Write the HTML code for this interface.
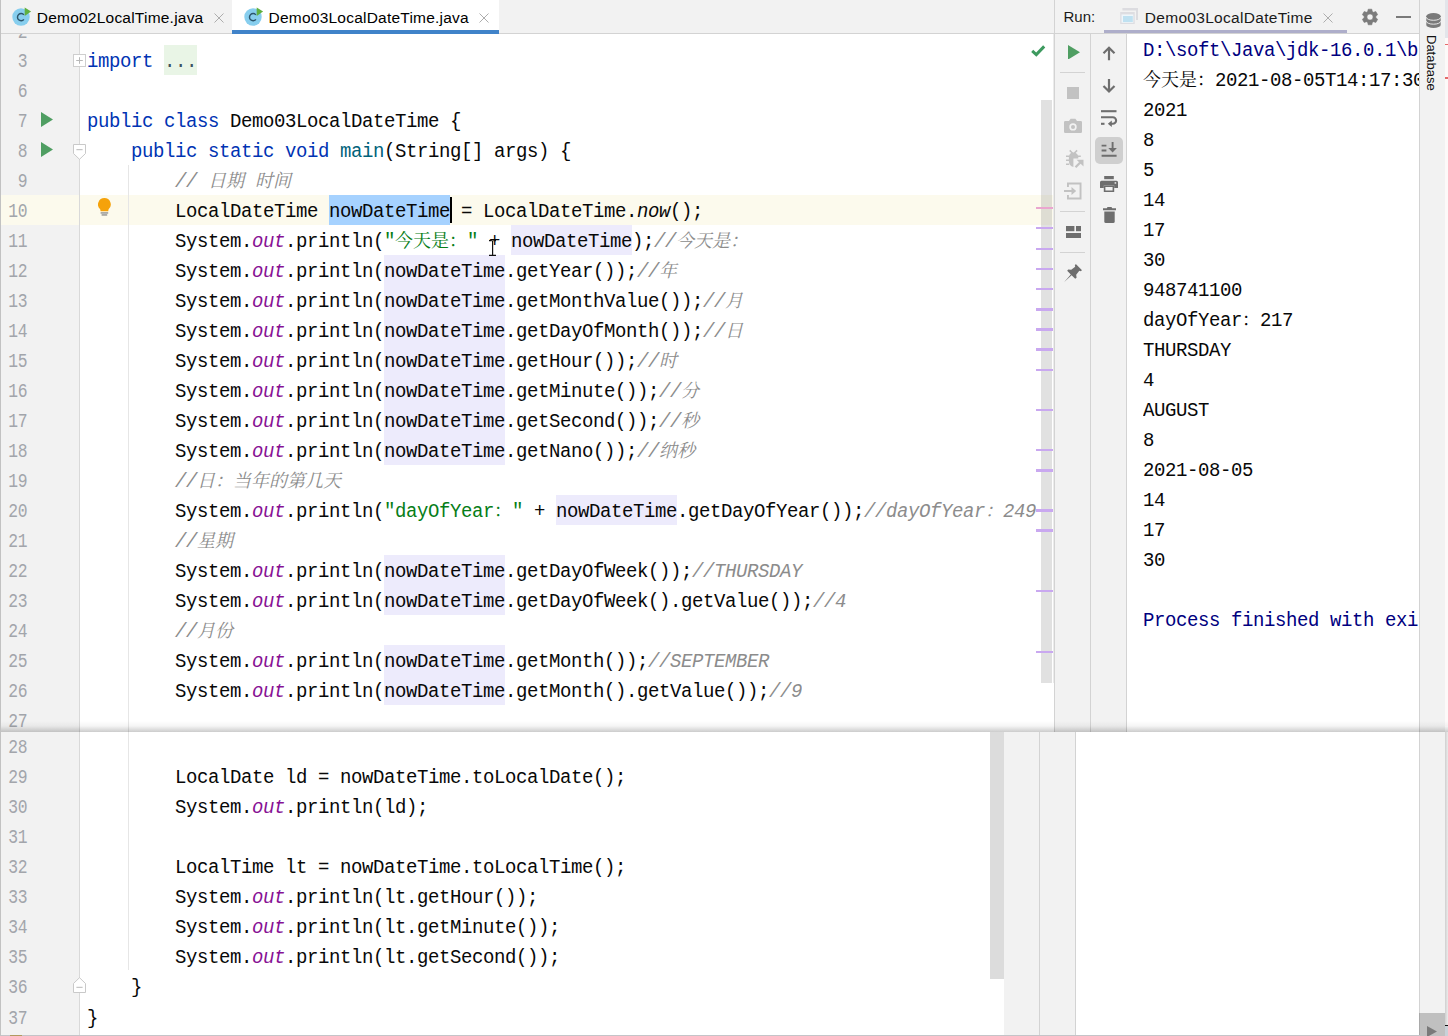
<!DOCTYPE html><html><head><meta charset="utf-8"><title>Demo03LocalDateTime</title><style>
html,body{margin:0;padding:0}
body{width:1448px;height:1036px;position:relative;overflow:hidden;background:#fff;font-family:"Liberation Sans",sans-serif;color:#000}
div,span,svg{box-sizing:border-box}
.a{position:absolute}
.m{font-family:"Liberation Mono",monospace;font-size:19.0px;letter-spacing:-0.4019px;white-space:pre;line-height:30px;height:30px;transform:scaleY(1.02);transform-origin:0 20.06px}
.ln{position:absolute;left:87px;color:#080808}
.no{position:absolute;left:0;width:27.2px;text-align:right;color:#a2a5ab;transform:scale(0.86,1.02);transform-origin:100% 20.06px}
.co{position:absolute;left:1143px;color:#080808}
.k{color:#0033b3}.s{color:#067d17}.c{color:#8c8c8c;font-style:italic}
.f{color:#871094;font-style:italic}.d{color:#00627a}.i{font-style:italic}
.b{color:#00007f}.fo{color:#3b5260}
.j{font-family:"Liberation Mono","Noto Serif CJK SC",monospace;font-size:18px;letter-spacing:0}
.ui{font-family:"Liberation Sans",sans-serif;white-space:pre;position:absolute}
</style></head><body><div class="a" style="left:0px;top:0px;width:1448px;height:33px;background:#f2f2f2;"></div><div class="a" style="left:232px;top:0px;width:267px;height:30px;background:#fff;"></div><div class="a" style="left:0px;top:33px;width:1445px;height:1px;background:#d3d3d3;"></div><div class="a" style="left:232px;top:30px;width:267px;height:3.6px;background:#4083c9;"></div><svg class="a" style="left:9.899999999999999px;top:5.800000000000001px;" width="22" height="22" viewBox="0 0 22 22"><circle cx="11" cy="11" r="8.7" fill="#87ceee"/><path d="M13.9 8.9A3.6 3.6 0 1 0 13.9 13.4" fill="none" stroke="#2d566c" stroke-width="1.45"/><path d="M14.7 1.4V9.9L21.1 5.6Z" fill="#5fb03f"/></svg><div class="ui" style="left:36.8px;top:0px;height:35px;line-height:35px;font-size:15.5px;color:#000;letter-spacing:0.22px">Demo02LocalTime.java</div><svg class="a" style="left:213px;top:11.7px;" width="12" height="12" viewBox="0 0 12 12"><path d="M1.5 1.5L10.5 10.5M10.5 1.5L1.5 10.5" stroke="#adadad" stroke-width="1.0" fill="none"/></svg><svg class="a" style="left:242.4px;top:5.800000000000001px;" width="22" height="22" viewBox="0 0 22 22"><circle cx="11" cy="11" r="8.7" fill="#87ceee"/><path d="M13.9 8.9A3.6 3.6 0 1 0 13.9 13.4" fill="none" stroke="#2d566c" stroke-width="1.45"/><path d="M14.7 1.4V9.9L21.1 5.6Z" fill="#5fb03f"/></svg><div class="ui" style="left:268.6px;top:0px;height:35px;line-height:35px;font-size:15.5px;color:#000;letter-spacing:0.22px">Demo03LocalDateTime.java</div><svg class="a" style="left:477.7px;top:11.7px;" width="12" height="12" viewBox="0 0 12 12"><path d="M1.5 1.5L10.5 10.5M10.5 1.5L1.5 10.5" stroke="#adadad" stroke-width="1.0" fill="none"/></svg><div class="ui" style="left:1063.5px;top:0px;height:34px;line-height:34px;font-size:15px;color:#1a1a1a;">Run:</div><svg class="a" style="left:1120px;top:8px;" width="18" height="16" viewBox="0 0 18 16"><path d="M2.4 0H18V12H16V2.5H2.4Z" fill="#dcdce0"/><rect x="0.2" y="4" width="14.5" height="12" fill="#dddde1"/><rect x="1.5" y="6.4" width="11.9" height="8.4" fill="#eef6fb"/><rect x="3" y="8" width="9.8" height="6" fill="#bfe1f1"/></svg><div class="ui" style="left:1144.8px;top:0px;height:35px;line-height:35px;font-size:15.5px;color:#1a1a1a;letter-spacing:0.3px">Demo03LocalDateTime</div><svg class="a" style="left:1322px;top:11.8px;" width="12" height="12" viewBox="0 0 12 12"><path d="M1.5 1.5L10.5 10.5M10.5 1.5L1.5 10.5" stroke="#adadad" stroke-width="1.0" fill="none"/></svg><div class="a" style="left:1104px;top:30px;width:243px;height:3.4px;background:#aeaeca;"></div><svg class="a" style="left:1360.7px;top:8px;" width="18" height="18" viewBox="0 0 18 18"><path d="M6.70 3.57L7.18 1.21L10.82 1.21L11.30 3.57L12.56 4.29L14.83 3.53L16.66 6.68L14.85 8.27L14.85 9.73L16.66 11.32L14.83 14.47L12.56 13.71L11.30 14.43L10.82 16.79L7.18 16.79L6.70 14.43L5.44 13.71L3.17 14.47L1.34 11.32L3.15 9.73L3.15 8.27L1.34 6.68L3.17 3.53L5.44 4.29Z M12.100 9A3.100 3.100 0 1 0 5.900 9A3.100 3.100 0 1 0 12.100 9Z" fill="#7c7c7c" fill-rule="evenodd" stroke="#7c7c7c" stroke-width="0.600" stroke-linejoin="round"/></svg><div class="a" style="left:1395.5px;top:16px;width:15px;height:2px;background:#7a7a7a;"></div><div class="a" style="left:1px;top:34px;width:78px;height:698px;background:#f2f2f2;"></div><div class="a" style="left:79px;top:34px;width:1px;height:698px;background:#d9d9d9;"></div><div class="a" style="left:80px;top:195px;width:974px;height:30px;background:#fcfaed;"></div><div class="a" style="left:1px;top:195px;width:78px;height:30px;background:#fcfaed;"></div><div class="a" style="left:164px;top:45px;width:33px;height:30px;background:#e9f5e6;"></div><div class="a" style="left:384px;top:255px;width:121px;height:30px;background:#edebfc;"></div><div class="a" style="left:384px;top:285px;width:121px;height:30px;background:#edebfc;"></div><div class="a" style="left:384px;top:315px;width:121px;height:30px;background:#edebfc;"></div><div class="a" style="left:384px;top:345px;width:121px;height:30px;background:#edebfc;"></div><div class="a" style="left:384px;top:375px;width:121px;height:30px;background:#edebfc;"></div><div class="a" style="left:384px;top:405px;width:121px;height:30px;background:#edebfc;"></div><div class="a" style="left:384px;top:435px;width:121px;height:30px;background:#edebfc;"></div><div class="a" style="left:384px;top:555px;width:121px;height:30px;background:#edebfc;"></div><div class="a" style="left:384px;top:585px;width:121px;height:30px;background:#edebfc;"></div><div class="a" style="left:384px;top:645px;width:121px;height:30px;background:#edebfc;"></div><div class="a" style="left:384px;top:675px;width:121px;height:30px;background:#edebfc;"></div><div class="a" style="left:511px;top:225px;width:121px;height:30px;background:#edebfc;"></div><div class="a" style="left:556px;top:495px;width:121px;height:30px;background:#edebfc;"></div><div class="a" style="left:329px;top:195px;width:121px;height:30px;background:#a6d2ff;"></div><div class="a" style="left:128px;top:165px;width:1px;height:567px;background:#e6e6e6;"></div><div class="a" style="left:0;top:34px;width:80px;height:698px;overflow:hidden"><div class="a" style="left:0;top:-34px"><div class="m no" style="top:18px">2</div></div></div><div class="m no" style="top:47px">3</div><div class="m no" style="top:77px">6</div><div class="m no" style="top:107px">7</div><div class="m no" style="top:137px">8</div><div class="m no" style="top:167px">9</div><div class="m no" style="top:197px">10</div><div class="m no" style="top:227px">11</div><div class="m no" style="top:257px">12</div><div class="m no" style="top:287px">13</div><div class="m no" style="top:317px">14</div><div class="m no" style="top:347px">15</div><div class="m no" style="top:377px">16</div><div class="m no" style="top:407px">17</div><div class="m no" style="top:437px">18</div><div class="m no" style="top:467px">19</div><div class="m no" style="top:497px">20</div><div class="m no" style="top:527px">21</div><div class="m no" style="top:557px">22</div><div class="m no" style="top:587px">23</div><div class="m no" style="top:617px">24</div><div class="m no" style="top:647px">25</div><div class="m no" style="top:677px">26</div><div class="m no" style="top:707px">27</div><div class="a" style="left:0;top:34px;width:1041px;height:698px;overflow:hidden"><div class="a" style="left:0;top:-34px"><div class="m ln" style="top:47px"><span class="k">import</span> <span class="fo">...</span></div><div class="m ln" style="top:107px"><span class="k">public class</span> Demo03LocalDateTime {</div><div class="m ln" style="top:137px">    <span class="k">public static void</span> <span class="d">main</span>(String[] args) {</div><div class="m ln" style="top:167px"><span class="c">        // <span class="j">日期</span> <span class="j">时间</span></span></div><div class="m ln" style="top:197px">        LocalDateTime nowDateTime = LocalDateTime.<span class="i">now</span>();</div><div class="m ln" style="top:227px">        System.<span class="f">out</span>.println(<span class="s">"<span class="j">今天是：</span>"</span> + nowDateTime);<span class="c">//<span class="j">今天是：</span></span></div><div class="m ln" style="top:257px">        System.<span class="f">out</span>.println(nowDateTime.getYear());<span class="c">//<span class="j">年</span></span></div><div class="m ln" style="top:287px">        System.<span class="f">out</span>.println(nowDateTime.getMonthValue());<span class="c">//<span class="j">月</span></span></div><div class="m ln" style="top:317px">        System.<span class="f">out</span>.println(nowDateTime.getDayOfMonth());<span class="c">//<span class="j">日</span></span></div><div class="m ln" style="top:347px">        System.<span class="f">out</span>.println(nowDateTime.getHour());<span class="c">//<span class="j">时</span></span></div><div class="m ln" style="top:377px">        System.<span class="f">out</span>.println(nowDateTime.getMinute());<span class="c">//<span class="j">分</span></span></div><div class="m ln" style="top:407px">        System.<span class="f">out</span>.println(nowDateTime.getSecond());<span class="c">//<span class="j">秒</span></span></div><div class="m ln" style="top:437px">        System.<span class="f">out</span>.println(nowDateTime.getNano());<span class="c">//<span class="j">纳秒</span></span></div><div class="m ln" style="top:467px"><span class="c">        //<span class="j">日：当年的第几天</span></span></div><div class="m ln" style="top:497px">        System.<span class="f">out</span>.println(<span class="s">"dayOfYear<span class="j">：</span>"</span> + nowDateTime.getDayOfYear());<span class="c">//dayOfYear<span class="j">：</span>249</span></div><div class="m ln" style="top:527px"><span class="c">        //<span class="j">星期</span></span></div><div class="m ln" style="top:557px">        System.<span class="f">out</span>.println(nowDateTime.getDayOfWeek());<span class="c">//THURSDAY</span></div><div class="m ln" style="top:587px">        System.<span class="f">out</span>.println(nowDateTime.getDayOfWeek().getValue());<span class="c">//4</span></div><div class="m ln" style="top:617px"><span class="c">        //<span class="j">月份</span></span></div><div class="m ln" style="top:647px">        System.<span class="f">out</span>.println(nowDateTime.getMonth());<span class="c">//SEPTEMBER</span></div><div class="m ln" style="top:677px">        System.<span class="f">out</span>.println(nowDateTime.getMonth().getValue());<span class="c">//9</span></div></div></div><div class="a" style="left:450px;top:197px;width:2px;height:26px;background:#000;"></div><svg class="a" style="left:41px;top:112px;" width="12" height="15" viewBox="0 0 12 15"><path d="M0 0L12 7.5L0 15Z" fill="#4f9e62"/></svg><svg class="a" style="left:41px;top:142px;" width="12" height="15" viewBox="0 0 12 15"><path d="M0 0L12 7.5L0 15Z" fill="#4f9e62"/></svg><svg class="a" style="left:73.1px;top:54.1px;" width="13" height="13" viewBox="0 0 13 13"><rect x="0.500" y="0.500" width="12" height="12" fill="#fff" stroke="#cecece"/><path d="M3.200 6.500H9.800M6.500 3.200V9.800" stroke="#b8b8b8" stroke-width="1" fill="none"/></svg><svg class="a" style="left:73.1px;top:144.2px;" width="13" height="16" viewBox="0 0 13 16"><path d="M0.500 0.500H12.500V9.500L6.500 15.300L0.500 9.500Z" fill="#fff" stroke="#c9c9c9"/><path d="M3.400 5.700H9.600" stroke="#b8b8b8" stroke-width="1" fill="none"/></svg><svg class="a" style="left:98.4px;top:197.9px;" width="12.8" height="17.8" viewBox="0 0 12.8 17.8"><path d="M6.4 0A6.4 6.4 0 0 1 10.600 11.200L10.200 13.300H2.600L2.200 11.200A6.400 6.400 0 0 1 6.400 0Z" fill="#f5a20a"/><rect x="2.600" y="14.300" width="7.600" height="1.300" fill="#8a8a8a"/><rect x="3.600" y="16.300" width="5.600" height="1.300" fill="#8a8a8a"/></svg><svg class="a" style="left:489.09999999999997px;top:240px;" width="7.2" height="16" viewBox="0 0 7.2 16"><path d="M0 0.600H2.800M4.600 0.600H7M3.600 0.600V15.400M0 15.400H7" fill="none" stroke="#111" stroke-width="1.200"/></svg><div class="a" style="left:1041px;top:100px;width:11px;height:583px;background:rgba(120,120,120,0.22);"></div><div class="a" style="left:1053px;top:34px;width:1px;height:649px;background:#ebebeb;"></div><div class="a" style="left:1036px;top:206.7px;width:17px;height:2.6px;background:#eaa6cf;"></div><div class="a" style="left:1036px;top:226.7px;width:17px;height:2.6px;background:#c9a8f0;"></div><div class="a" style="left:1036px;top:247.7px;width:17px;height:2.6px;background:#c9a8f0;"></div><div class="a" style="left:1036px;top:267.7px;width:17px;height:2.6px;background:#c9a8f0;"></div><div class="a" style="left:1036px;top:287.7px;width:17px;height:2.6px;background:#c9a8f0;"></div><div class="a" style="left:1036px;top:308.2px;width:17px;height:2.6px;background:#c9a8f0;"></div><div class="a" style="left:1036px;top:328.2px;width:17px;height:2.6px;background:#c9a8f0;"></div><div class="a" style="left:1036px;top:348.2px;width:17px;height:2.6px;background:#c9a8f0;"></div><div class="a" style="left:1036px;top:368.7px;width:17px;height:2.6px;background:#c9a8f0;"></div><div class="a" style="left:1036px;top:408.7px;width:17px;height:2.6px;background:#c9a8f0;"></div><div class="a" style="left:1036px;top:448.7px;width:17px;height:2.6px;background:#c9a8f0;"></div><div class="a" style="left:1036px;top:469.2px;width:17px;height:2.6px;background:#c9a8f0;"></div><div class="a" style="left:1036px;top:509.2px;width:17px;height:2.6px;background:#c9a8f0;"></div><div class="a" style="left:1036px;top:529.2px;width:17px;height:2.6px;background:#c9a8f0;"></div><div class="a" style="left:1036px;top:589.7px;width:17px;height:2.6px;background:#c9a8f0;"></div><div class="a" style="left:1036px;top:650.7px;width:17px;height:2.6px;background:#c9a8f0;"></div><svg class="a" style="left:1030.5px;top:44.5px;" width="15" height="12" viewBox="0 0 15 12"><path d="M1.200 5.800L5.300 9.600L13.200 1.400" fill="none" stroke="#3d9a5f" stroke-width="3"/></svg><div class="a" style="left:1054px;top:0px;width:1px;height:732px;background:#d3d3d3;"></div><div class="a" style="left:1055px;top:34px;width:35px;height:698px;background:#f2f2f2;"></div><div class="a" style="left:1090px;top:34px;width:1px;height:698px;background:#d3d3d3;"></div><div class="a" style="left:1091px;top:34px;width:35px;height:698px;background:#f2f2f2;"></div><div class="a" style="left:1126px;top:34px;width:1px;height:698px;background:#d3d3d3;"></div><svg class="a" style="left:1068px;top:44.6px;" width="12" height="14.6" viewBox="0 0 12 14.6"><path d="M0 0L12 7.3L0 14.6Z" fill="#4f9e62"/></svg><div class="a" style="left:1060px;top:72px;width:25px;height:1px;background:#d3d3d3;"></div><div class="a" style="left:1060px;top:211px;width:25px;height:1px;background:#d3d3d3;"></div><div class="a" style="left:1060px;top:252px;width:25px;height:1px;background:#d3d3d3;"></div><div class="a" style="left:1067px;top:87px;width:12px;height:12px;background:#c2c2c2;"></div><svg class="a" style="left:1064px;top:118.4px;" width="18" height="15" viewBox="0 0 18 15"><path d="M1.2 3H5L6.6 0.8H11.4L13 3H16.8A1.2 1.2 0 0 1 18 4.2V13.8A1.2 1.2 0 0 1 16.800 15H1.2A1.200 1.200 0 0 1 0 13.8V4.2A1.2 1.2 0 0 1 1.200 3Z M9 5.200A3.7 3.7 0 1 0 9 12.600A3.7 3.7 0 1 0 9 5.200Z" fill="#c2c2c2" fill-rule="evenodd"/><circle cx="9" cy="8.9" r="2" fill="#c2c2c2"/></svg><svg class="a" style="left:1063.5px;top:148.5px;" width="20" height="20" viewBox="0 0 20 20"><g fill="none" stroke="#c2c2c2" stroke-width="1.500"><path d="M5.700 1.400L8.600 4.300M13.100 1.400L10.200 4.300"/><path d="M2 7.300H5.200M2 11.200H5.200M2 15.200H5.200M14 7.300H16.800"/></g><path d="M9.300 3.600C12.200 3.600 14.100 5.400 14.300 7.600V9.400H9.400V17.900C6.600 17.500 4.900 15.200 4.900 12.200V8C4.900 5.500 6.700 3.600 9.300 3.600Z" fill="#c2c2c2"/><path d="M11.500 18.300L16.800 13" fill="none" stroke="#c2c2c2" stroke-width="2.300"/><path d="M12.600 10.700H19.500V17.500Z" fill="#c2c2c2"/></svg><svg class="a" style="left:1064.3px;top:182px;" width="18" height="18" viewBox="0 0 18 18"><path d="M3 0.500H17.500V17.500H3V13H4.900V15.600H15.600V2.400H4.900V5H3Z" fill="#c2c2c2"/><path d="M0 8H7.500V5L12.200 9L7.500 13V10H0Z" fill="#c2c2c2"/></svg><svg class="a" style="left:1065.5px;top:226px;" width="15" height="12.2" viewBox="0 0 15 12.2"><rect x="0" y="0" width="8.400" height="5.200" fill="#6e6e6e"/><rect x="10" y="0" width="5" height="5.200" fill="#6e6e6e"/><rect x="0" y="7" width="15" height="5.200" fill="#6e6e6e"/></svg><svg class="a" style="left:1064px;top:264px;" width="18" height="18.5" viewBox="0 0 18 18.5"><path d="M11.800 0L18 6.200L16.600 7.200L15.300 6.800L12.200 10.800L12.600 13.800L11.200 14.800L7.600 11.200L0 18.300L6.800 10.400L3.200 6.800L4.200 5.400L7.200 5.800L11.200 2.700L10.800 1.400Z" fill="#6e6e6e"/></svg><svg class="a" style="left:1101.8px;top:45.5px;" width="14" height="15" viewBox="0 0 14 15"><path d="M7 14.200V1.700M1.500 7.200L7 1.700L12.500 7.200" fill="none" stroke="#6e6e6e" stroke-width="2.200"/></svg><svg class="a" style="left:1101.8px;top:79px;" width="14" height="15" viewBox="0 0 14 15"><path d="M7 0V12.500M1.500 7L7 12.500L12.500 7" fill="none" stroke="#6e6e6e" stroke-width="2.200"/></svg><svg class="a" style="left:1101px;top:110px;" width="17" height="17.5" viewBox="0 0 17 17.5"><g fill="none" stroke="#6e6e6e" stroke-width="2.100"><path d="M0 1.200H15.500"/><path d="M0 7.200H11.800A3.300 3.300 0 0 1 11.800 13.800H9"/><path d="M0 13.800H3.500"/></g><path d="M6.800 13.800L10.800 10.600V17Z" fill="#6e6e6e"/></svg><div class="a" style="left:1095px;top:137px;width:27.5px;height:27px;background:#cfcfcf;border-radius:5px"></div><svg class="a" style="left:1101px;top:142.4px;" width="17" height="15" viewBox="0 0 17 15"><g fill="none" stroke="#6e6e6e" stroke-width="1.900"><path d="M0.600 3.600H5.400M0.600 8.500H5.400M0.600 13.700H15.600"/><path d="M11.600 0V7"/></g><path d="M7.300 6L15.900 6L11.600 10.600Z" fill="#6e6e6e"/></svg><svg class="a" style="left:1100px;top:175.5px;" width="18" height="16.5" viewBox="0 0 18 16.5"><rect x="4.200" y="0" width="9.600" height="3.200" fill="#6e6e6e"/><path d="M1.500 4.800H16.500A1.500 1.500 0 0 1 18 6.300V12H14.200V9.600H3.800V12H0V6.300A1.500 1.500 0 0 1 1.500 4.800Z" fill="#6e6e6e"/><path d="M3.800 9.600H14.200V16.200H3.800Z M5.400 11V14.600H12.600V11Z" fill="#6e6e6e" fill-rule="evenodd"/><rect x="14.600" y="6.300" width="1.600" height="1.300" fill="#fff"/></svg><svg class="a" style="left:1102.5px;top:207.2px;" width="13" height="16" viewBox="0 0 13 16"><path d="M4.500 0H8.500L9.200 1.200H13V3.200H0V1.200H3.800Z" fill="#6e6e6e"/><path d="M1.300 4.600H11.700V14.400A1.600 1.600 0 0 1 10.100 16H2.900A1.600 1.600 0 0 1 1.300 14.400Z" fill="#6e6e6e"/></svg><div class="a" style="left:1127px;top:34px;width:292px;height:698px;overflow:hidden"><div class="a" style="left:-1127px;top:-34px"><div class="m co b" style="top:36px">D:\soft\Java\jdk-16.0.1\bin\java.exe</div><div class="m co " style="top:66px"><span class="j">今天是：</span>2021-08-05T14:17:30.948741100</div><div class="m co " style="top:96px">2021</div><div class="m co " style="top:126px">8</div><div class="m co " style="top:156px">5</div><div class="m co " style="top:186px">14</div><div class="m co " style="top:216px">17</div><div class="m co " style="top:246px">30</div><div class="m co " style="top:276px">948741100</div><div class="m co " style="top:306px">dayOfYear<span class="j">：</span>217</div><div class="m co " style="top:336px">THURSDAY</div><div class="m co " style="top:366px">4</div><div class="m co " style="top:396px">AUGUST</div><div class="m co " style="top:426px">8</div><div class="m co " style="top:456px">2021-08-05</div><div class="m co " style="top:486px">14</div><div class="m co " style="top:516px">17</div><div class="m co " style="top:546px">30</div><div class="m co b" style="top:606px">Process finished with exit code 0</div></div></div><div class="a" style="left:1419px;top:0px;width:1px;height:1036px;background:#d3d3d3;"></div><div class="a" style="left:1420px;top:0px;width:25px;height:1036px;background:#f2f2f2;"></div><svg class="a" style="left:1425.7px;top:13.2px;" width="15" height="15.2" viewBox="0 0 15 15.2"><g fill="#7a7a7a"><ellipse cx="7.5" cy="3.2" rx="7.2" ry="3.1"/><path d="M0.3 3.2V12A7.2 3 0 0 0 14.7 12V3.2Z"/></g><g fill="none" stroke="#f2f2f2" stroke-width="0.9"><path d="M0.3 4.300A7.2 3 0 0 0 14.7 4.300"/><path d="M0.3 8.200A7.2 3 0 0 0 14.7 8.200"/></g></svg><div class="ui" style="left:1437.6px;top:34.6px;font-size:13px;line-height:14px;height:14px;transform-origin:0 0;transform:rotate(90deg);color:#111">Database</div><div class="a" style="left:1445px;top:0px;width:3px;height:38px;background:#e3e5ea;"></div><div class="a" style="left:1445px;top:38px;width:3px;height:688px;background:#fdf9f9;"></div><div class="a" style="left:1445px;top:43.5px;width:3px;height:1.5px;background:#e46a6a;"></div><div class="a" style="left:1445px;top:77px;width:3px;height:1.5px;background:#e46a6a;"></div><div class="a" style="left:0px;top:721px;width:1448px;height:11px;background:linear-gradient(to bottom,rgba(0,0,0,0) 0%,rgba(0,0,0,0.04) 45%,rgba(0,0,0,0.20) 100%);"></div><div class="a" style="left:1px;top:732px;width:1444px;height:304px;background:#fff;"></div><div class="a" style="left:1px;top:732px;width:78px;height:304px;background:#f2f2f2;"></div><div class="a" style="left:79px;top:732px;width:1px;height:304px;background:#d9d9d9;"></div><div class="a" style="left:128px;top:732px;width:1px;height:238px;background:#e6e6e6;"></div><div class="m no" style="top:733px">28</div><div class="m no" style="top:763px">29</div><div class="m ln" style="top:763px">        LocalDate ld = nowDateTime.toLocalDate();</div><div class="m no" style="top:793px">30</div><div class="m ln" style="top:793px">        System.<span class="f">out</span>.println(ld);</div><div class="m no" style="top:823px">31</div><div class="m no" style="top:853px">32</div><div class="m ln" style="top:853px">        LocalTime lt = nowDateTime.toLocalTime();</div><div class="m no" style="top:883px">33</div><div class="m ln" style="top:883px">        System.<span class="f">out</span>.println(lt.getHour());</div><div class="m no" style="top:913px">34</div><div class="m ln" style="top:913px">        System.<span class="f">out</span>.println(lt.getMinute());</div><div class="m no" style="top:943px">35</div><div class="m ln" style="top:943px">        System.<span class="f">out</span>.println(lt.getSecond());</div><div class="m no" style="top:973px">36</div><div class="m ln" style="top:973px">    }</div><div class="m no" style="top:1004px">37</div><div class="m ln" style="top:1004px">}</div><svg class="a" style="left:73.1px;top:976.6px;" width="13" height="16" viewBox="0 0 13 16"><path d="M0.500 15.500H12.500V6.500L6.500 0.700L0.500 6.500Z" fill="#fff" stroke="#c9c9c9"/><path d="M3.400 10.300H9.600" stroke="#b8b8b8" stroke-width="1" fill="none"/></svg><div class="a" style="left:990px;top:732px;width:14px;height:247px;background:#dcdcdc;"></div><div class="a" style="left:1004px;top:732px;width:35px;height:304px;background:#f2f2f2;"></div><div class="a" style="left:1039px;top:732px;width:1px;height:304px;background:#d3d3d3;"></div><div class="a" style="left:1040px;top:732px;width:35px;height:304px;background:#f2f2f2;"></div><div class="a" style="left:1075px;top:732px;width:1px;height:304px;background:#d3d3d3;"></div><div class="a" style="left:1419px;top:732px;width:1px;height:304px;background:#d3d3d3;"></div><div class="a" style="left:1420px;top:732px;width:25px;height:304px;background:#f2f2f2;"></div><div class="a" style="left:1419px;top:1013px;width:26px;height:23px;background:#c0c0c0;"></div><div class="a" style="left:1419px;top:1013px;width:1px;height:23px;background:#a9a9a9;"></div><svg class="a" style="left:1427.2px;top:1026.3px;" width="10" height="10" viewBox="0 0 10 10"><path d="M0 0L10 5.500L0 11Z" fill="#7a7a7a"/></svg><div class="a" style="left:1445px;top:732px;width:3px;height:304px;background:linear-gradient(to right,#cfcfcf,#ececec);"></div><div class="a" style="left:1445px;top:1025px;width:3px;height:1px;background:#111;"></div><div class="a" style="left:1445px;top:1026px;width:3px;height:10px;background:#c9d1d8;"></div><div class="a" style="left:0px;top:1035px;width:1420px;height:1px;background:#c4c4c8;"></div><div class="a" style="left:10px;top:1035px;width:12px;height:1px;background:#b09a60;"></div><div class="a" style="left:0px;top:0px;width:1px;height:1036px;background:#c2c2c2;"></div></body></html>
